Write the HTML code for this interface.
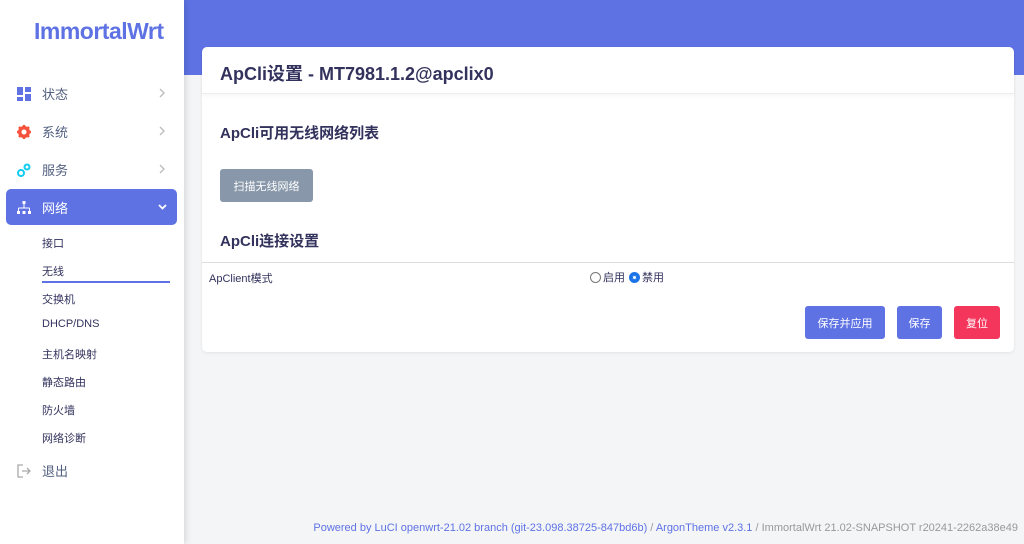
<!DOCTYPE html>
<html><head><meta charset="utf-8"><style>
*{margin:0;padding:0;box-sizing:border-box}
body{width:1024px;height:544px;overflow:hidden;background:#f4f5f7;font-family:"Liberation Sans","Noto Sans CJK SC",sans-serif;position:relative;color:#32325d}
.side{position:absolute;left:0;top:0;width:184px;height:544px;background:#fff;box-shadow:2px 0 6px rgba(0,0,0,.12);z-index:2}
.logo{position:absolute;left:34px;top:18px;font-size:23px;font-weight:bold;color:#5e72e4;letter-spacing:-.5px}
.mi{position:absolute;left:0;width:184px;height:36px;font-size:13px;color:#525f7f}
.mi .ic{position:absolute;left:17px;top:12px;width:14px;height:14px}
.mi .t{position:absolute;left:42px;top:9px}
.mi .ar{position:absolute;left:159px;top:13px;width:6px;height:10px}
.act{left:6px;width:171px;background:#5e72e4;border-radius:5px;color:#fff}
.sub{position:absolute;left:42px;font-size:11px;color:#32325d}
.top{position:absolute;left:184px;top:0;width:840px;height:75px;background:#5e72e4}
.card{position:absolute;left:202px;top:47px;width:812px;height:305px;background:#fff;border-radius:5px;box-shadow:0 1px 3px rgba(0,0,0,.08)}
.card .hd{height:47px;border-bottom:1px solid #eee;box-shadow:0 2px 4px rgba(0,0,0,.04);font-size:18px;font-weight:bold;padding:13px 0 0 18px;color:#32325d}
h3{position:absolute;left:18px;font-size:15px;font-weight:bold;color:#32325d}
.btn{position:absolute;color:#fff;font-size:11px;border-radius:3px;display:flex;align-items:center;justify-content:center}
.foot{position:absolute;right:6px;top:522px;font-size:11px;color:#999}
.foot a{color:#5e72e4}
</style></head><body>
<div class="top"></div>
<div class="side">
<div class="logo">ImmortalWrt</div>
<div class="mi" style="top:75px"><svg class="ic" viewBox="0 0 14 14"><rect x="0" y="0" width="6" height="8" fill="#5e72e4"/><rect x="8" y="0" width="6" height="5" fill="#5e72e4"/><rect x="0" y="10" width="6" height="4" fill="#5e72e4"/><rect x="8" y="7" width="6" height="7" fill="#5e72e4"/></svg><span class="t">状态</span><svg class="ar" viewBox="0 0 6 10"><path d="M1 1l4 4-4 4" fill="none" stroke="#bbb" stroke-width="1.3"/></svg></div>
<div class="mi" style="top:113px"><svg class="ic" viewBox="0 0 14 14"><circle cx="7" cy="7" r="4.5" fill="none" stroke="#f5533d" stroke-width="3"/><g stroke="#f5533d" stroke-width="2.5"><line x1="7" y1="0" x2="7" y2="14"/><line x1="0" y1="7" x2="14" y2="7"/><line x1="2" y1="2" x2="12" y2="12"/><line x1="12" y1="2" x2="2" y2="12"/></g><circle cx="7" cy="7" r="2.5" fill="#fff"/></svg><span class="t">系统</span><svg class="ar" viewBox="0 0 6 10"><path d="M1 1l4 4-4 4" fill="none" stroke="#bbb" stroke-width="1.3"/></svg></div>
<div class="mi" style="top:151px"><svg class="ic" viewBox="0 0 14 14"><circle cx="4" cy="10" r="3" fill="none" stroke="#11cdef" stroke-width="2"/><circle cx="10" cy="4" r="2.5" fill="none" stroke="#11cdef" stroke-width="2"/></svg><span class="t">服务</span><svg class="ar" viewBox="0 0 6 10"><path d="M1 1l4 4-4 4" fill="none" stroke="#bbb" stroke-width="1.3"/></svg></div>
<div class="mi act" style="top:189px"><svg class="ic" style="left:11px" viewBox="0 0 14 14" fill="#fff"><rect x="5.5" y="0" width="3" height="3"/><rect x="6.5" y="3" width="1" height="4"/><rect x="1.5" y="6.5" width="11" height="1"/><rect x="0" y="10" width="3" height="3"/><rect x="5.5" y="10" width="3" height="3"/><rect x="11" y="10" width="3" height="3"/><rect x="1" y="7" width="1" height="3"/><rect x="12" y="7" width="1" height="3"/></svg><span class="t" style="left:36px;color:#fff">网络</span><svg style="position:absolute;left:152px;top:15px;width:9px;height:6px" viewBox="0 0 9 6"><path d="M1 1l3.5 3.5L8 1" fill="none" stroke="#fff" stroke-width="1.8"/></svg></div>
<div class="sub" style="top:235px">接口</div>
<div class="sub" style="top:263px">无线</div>
<div style="position:absolute;left:42px;top:281px;width:128px;height:2px;background:#5e72e4"></div>
<div class="sub" style="top:291px">交换机</div>
<div class="sub" style="top:318px">DHCP/DNS</div>
<div class="sub" style="top:346px">主机名映射</div>
<div class="sub" style="top:374px">静态路由</div>
<div class="sub" style="top:402px">防火墙</div>
<div class="sub" style="top:430px">网络诊断</div>
<div class="mi" style="top:452px"><svg class="ic" viewBox="0 0 14 14" fill="none" stroke="#aaa" stroke-width="1.3"><path d="M6 1H1v12h5M5 7h8M10 4l3 3-3 3"/></svg><span class="t">退出</span></div>
</div>
<div class="card">
<div class="hd">ApCli设置 - MT7981.1.2@apclix0</div>
<h3 style="top:75px">ApCli可用无线网络列表</h3>
<div class="btn" style="left:18px;top:122px;width:93px;height:33px;background:#8898aa">扫描无线网络</div>
<h3 style="top:183px">ApCli连接设置</h3>
<div style="position:absolute;left:0;top:215px;width:812px;height:1px;background:#ddd"></div>
<div style="position:absolute;left:7px;top:223px;font-size:11px">ApClient模式</div>
<div style="position:absolute;left:388px;top:222px;font-size:11px;display:flex;align-items:center"><span style="width:11px;height:11px;border:1px solid #777;border-radius:50%;display:inline-block;margin-right:2px"></span>启用<span style="width:11px;height:11px;border:3px solid #1a73e8;border-radius:50%;display:inline-block;margin:0 2px 0 4px;box-shadow:0 0 0 1px #1a73e8 inset"></span>禁用</div>
<div class="btn" style="left:603px;top:259px;width:80px;height:33px;background:#5e72e4">保存并应用</div>
<div class="btn" style="left:695px;top:259px;width:45px;height:33px;background:#5e72e4">保存</div>
<div class="btn" style="left:752px;top:259px;width:46px;height:33px;background:#f5365c">复位</div>
</div>
<div class="foot"><a>Powered by LuCI openwrt-21.02 branch (git-23.098.38725-847bd6b)</a> / <a>ArgonTheme v2.3.1</a> / ImmortalWrt 21.02-SNAPSHOT r20241-2262a38e49</div>
</body></html>
